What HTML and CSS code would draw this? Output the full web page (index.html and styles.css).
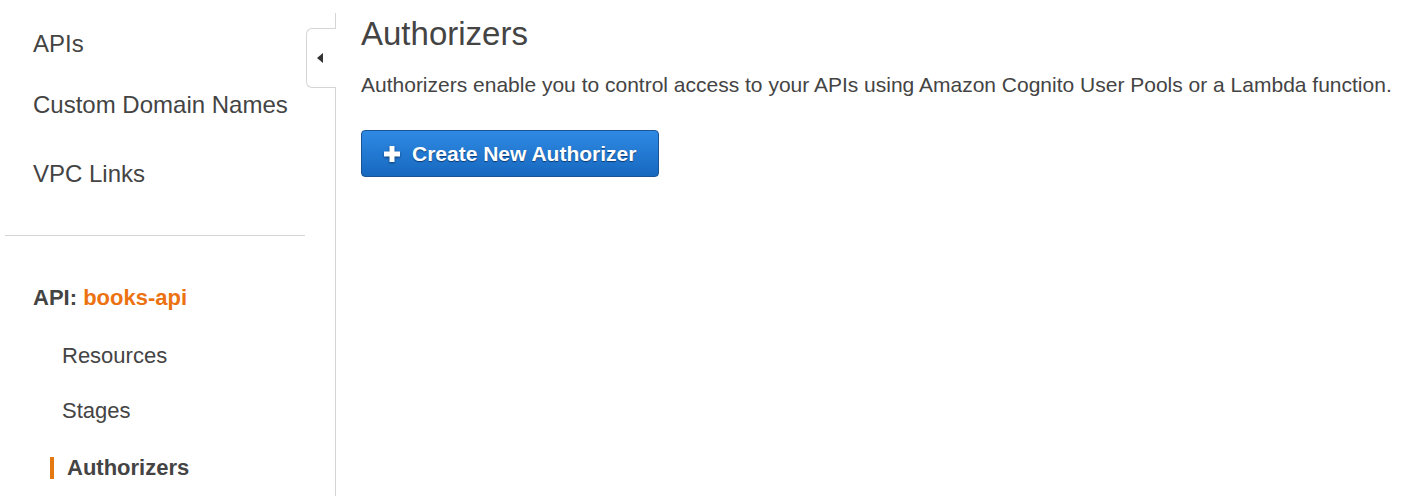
FILE: index.html
```html
<!DOCTYPE html>
<html lang="en">
<head>
    <meta charset="UTF-8">
    <title>Authorizers</title>
    <link rel="stylesheet" href="styles.css">
</head>
<body>
    <div class="layout">
        <nav class="sidebar">
            <a class="nav-top nav-apis" href="#">APIs</a>
            <a class="nav-top nav-domains" href="#">Custom Domain Names</a>
            <a class="nav-top nav-vpc" href="#">VPC Links</a>

            <div class="divider"></div>

            <div class="api-name">API: <span class="api-id">books-api</span></div>
            <a class="nav-sub nav-resources" href="#">Resources</a>
            <a class="nav-sub nav-stages" href="#">Stages</a>
            <a class="nav-sub active" href="#">Authorizers</a>

            <div class="collapse-tab"><span class="arrow"></span></div>
        </nav>

        <main class="content">
            <h1>Authorizers</h1>
            <p class="intro">Authorizers enable you to control access to your APIs using Amazon Cognito User Pools or a Lambda function.</p>
            <button class="btn-create">
                <svg class="plus" width="16" height="16" viewBox="0 0 16 16">
                    <path d="M5.5 0h5v5.5h5.5v5h-5.5v5.5h-5v-5.5h-5.5v-5h5.5z" fill="#fff"/>
                </svg>
                Create New Authorizer
            </button>
        </main>
    </div>
</body>
</html>
```

FILE: styles.css
```css
* {
    margin: 0;
    padding: 0;
    box-sizing: border-box;
}

body {
    font-family: 'Liberation Sans', Arial, sans-serif;
    color: #444;
    background: #fff;
    height: 496px;
    overflow: hidden;
}

a {
    color: #444;
    text-decoration: none;
}

.layout {
    display: flex;
    height: 100%;
}

/* Left navigation */
.sidebar {
    position: relative;
    display: flex;
    flex-direction: column;
    width: 336px;
    flex-shrink: 0;
    margin-top: 13px;
    padding-top: 17px;
    border-right: 1px solid #d5d5d5;
}

.nav-top {
    display: block;
    padding-left: 33px;
    font-size: 24px;
    line-height: 28px;
}

.nav-domains {
    margin-top: 33px;
}

.nav-vpc {
    margin-top: 41px;
}

.divider {
    width: 300px;
    margin: 47px 0 0 5px;
    border-top: 1px solid #d5d5d5;
}

.api-name {
    margin-top: 49px;
    padding-left: 33px;
    font-size: 22px;
    line-height: 26px;
    font-weight: bold;
}

.api-id {
    color: #ec7211;
}

.nav-sub {
    display: block;
    padding-left: 62px;
    font-size: 22px;
    line-height: 26px;
    margin-top: 32px;
}

.nav-stages {
    margin-top: 29px;
}

.nav-sub.active {
    position: relative;
    margin-top: 31px;
    padding-left: 67px;
    font-weight: bold;
}

.nav-sub.active::before {
    content: "";
    position: absolute;
    left: 50px;
    top: 2px;
    width: 4px;
    height: 22px;
    background: #e47911;
}

.collapse-tab {
    position: absolute;
    top: 15px;
    right: -1px;
    width: 30px;
    height: 60px;
    background: #fff;
    border: 1px solid #d5d5d5;
    border-right: none;
    border-radius: 6px 0 0 6px;
    display: flex;
    align-items: center;
    justify-content: center;
}

.arrow {
    width: 0;
    height: 0;
    margin-left: -4px;
    border-top: 5px solid transparent;
    border-bottom: 5px solid transparent;
    border-right: 6px solid #333;
}

/* Main area */
.content {
    flex: 1;
    padding-left: 25px;
}

h1 {
    margin-top: 16px;
    font-size: 33px;
    line-height: 36px;
    font-weight: normal;
    color: #444;
}

.intro {
    margin-top: 21px;
    font-size: 21px;
    line-height: 24px;
}

.btn-create {
    display: flex;
    align-items: center;
    width: 298px;
    height: 47px;
    margin-top: 33px;
    padding-left: 22px;
    font-family: 'Liberation Sans', Arial, sans-serif;
    font-size: 21px;
    font-weight: bold;
    color: #fff;
    text-shadow: 0 1px 1px #0b3a70;
    background: linear-gradient(#2f8ae4, #1768bf);
    border: 1px solid #1a5396;
    border-radius: 4px;
    cursor: pointer;
}

.plus {
    margin-right: 12px;
    filter: drop-shadow(0 1px 1px #0b3a70);
}
```
